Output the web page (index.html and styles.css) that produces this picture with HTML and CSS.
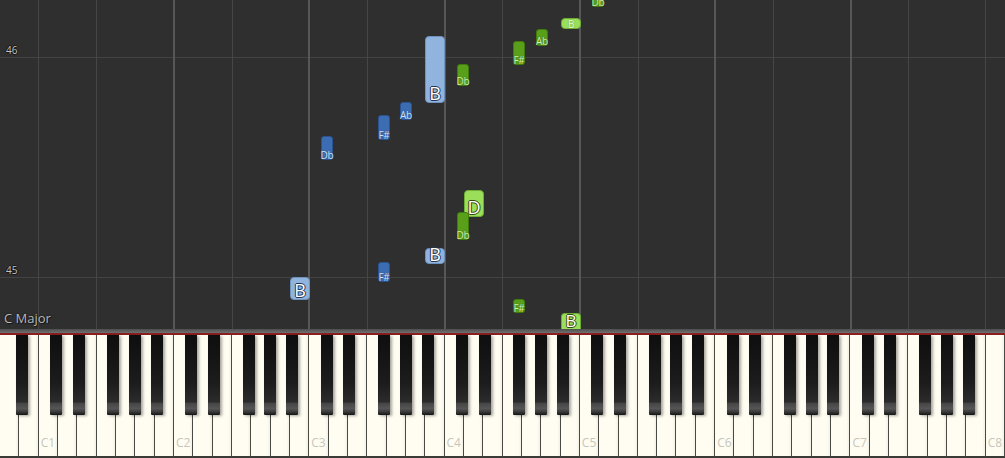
FILE: index.html
```html
<!DOCTYPE html>
<html>
<head>
<meta charset="utf-8">
<link rel="stylesheet" href="styles.css">
</head>
<body>
<div class="app">
  <div class="roll">
    <div class="hline" style="top:57px"></div>
    <div class="hline" style="top:277px"></div>
    <div class="vline" style="left:38px"></div>
    <div class="vline" style="left:96px"></div>
    <div class="vline major" style="left:173px"></div>
    <div class="vline" style="left:232px"></div>
    <div class="vline major" style="left:308px"></div>
    <div class="vline" style="left:367px"></div>
    <div class="vline major" style="left:444px"></div>
    <div class="vline" style="left:502px"></div>
    <div class="vline major" style="left:579px"></div>
    <div class="vline" style="left:638px"></div>
    <div class="vline major" style="left:714px"></div>
    <div class="vline" style="left:773px"></div>
    <div class="vline major" style="left:850px"></div>
    <div class="vline" style="left:908px"></div>
    <div class="vline" style="left:985px"></div>

    <div class="measure" style="top:44px">46</div>
    <div class="measure" style="top:264px">45</div>

    <div class="note lh-b" style="left:321px;top:136px;height:24px"><span class="lbl">Db</span></div>
    <div class="note lh-b" style="left:378px;top:115px;height:25px"><span class="lbl">F#</span></div>
    <div class="note lh-b" style="left:400px;top:102px;height:18px"><span class="lbl">Ab</span></div>
    <div class="note lh-b" style="left:378px;top:262px;height:20px"><span class="lbl">F#</span></div>
    <div class="note lh-w" style="left:425px;top:36px;height:67px"><span class="big">B</span></div>
    <div class="note lh-w" style="left:425px;top:248px;height:16px"><span class="big">B</span></div>
    <div class="note lh-w" style="left:290px;top:277px;height:23px"><span class="big">B</span></div>

    <div class="note rh-b" style="left:457px;top:64px;height:22px"><span class="lbl">Db</span></div>
    <div class="note rh-b" style="left:513px;top:41px;height:24px"><span class="lbl">F#</span></div>
    <div class="note rh-b" style="left:536px;top:29px;height:17px"><span class="lbl">Ab</span></div>
    <div class="note rh-b" style="left:592px;top:-10px;height:17px"><span class="lbl">Db</span></div>
    <div class="note rh-w" style="left:561px;top:18px;height:11px"><span class="lbl">B</span></div>
    <div class="note rh-w" style="left:464px;top:190px;height:27px"><span class="big">D</span></div>
    <div class="note rh-b" style="left:457px;top:212px;height:28px"><span class="lbl">Db</span></div>
    <div class="note rh-b" style="left:513px;top:299px;height:14px"><span class="lbl">F#</span></div>
    <div class="note rh-w open" style="left:561px;top:313px;height:16px"><span class="big">B</span></div>

    <div class="key-name">C Major</div>
  </div>

  <div class="rail"></div>

  <div class="keyboard">
    <div class="wk"><span class="bk"></span></div>
    <div class="wk"></div>
    <div class="wk"><span class="bk c"></span><span class="oct">C1</span></div>
    <div class="wk"><span class="bk d"></span></div>
    <div class="wk"></div>
    <div class="wk"><span class="bk f"></span></div>
    <div class="wk"><span class="bk g"></span></div>
    <div class="wk"><span class="bk"></span></div>
    <div class="wk"></div>
    <div class="wk"><span class="bk c"></span><span class="oct">C2</span></div>
    <div class="wk"><span class="bk d"></span></div>
    <div class="wk"></div>
    <div class="wk"><span class="bk f"></span></div>
    <div class="wk"><span class="bk g"></span></div>
    <div class="wk"><span class="bk"></span></div>
    <div class="wk"></div>
    <div class="wk"><span class="bk c"></span><span class="oct">C3</span></div>
    <div class="wk"><span class="bk d"></span></div>
    <div class="wk"></div>
    <div class="wk"><span class="bk f"></span></div>
    <div class="wk"><span class="bk g"></span></div>
    <div class="wk"><span class="bk"></span></div>
    <div class="wk"></div>
    <div class="wk"><span class="bk c"></span><span class="oct">C4</span></div>
    <div class="wk"><span class="bk d"></span></div>
    <div class="wk"></div>
    <div class="wk"><span class="bk f"></span></div>
    <div class="wk"><span class="bk g"></span></div>
    <div class="wk"><span class="bk"></span></div>
    <div class="wk"></div>
    <div class="wk"><span class="bk c"></span><span class="oct">C5</span></div>
    <div class="wk"><span class="bk d"></span></div>
    <div class="wk"></div>
    <div class="wk"><span class="bk f"></span></div>
    <div class="wk"><span class="bk g"></span></div>
    <div class="wk"><span class="bk"></span></div>
    <div class="wk"></div>
    <div class="wk"><span class="bk c"></span><span class="oct">C6</span></div>
    <div class="wk"><span class="bk d"></span></div>
    <div class="wk"></div>
    <div class="wk"><span class="bk f"></span></div>
    <div class="wk"><span class="bk g"></span></div>
    <div class="wk"><span class="bk"></span></div>
    <div class="wk"></div>
    <div class="wk"><span class="bk c"></span><span class="oct">C7</span></div>
    <div class="wk"><span class="bk d"></span></div>
    <div class="wk"></div>
    <div class="wk"><span class="bk f"></span></div>
    <div class="wk"><span class="bk g"></span></div>
    <div class="wk"><span class="bk"></span></div>
    <div class="wk"></div>
    <div class="wk"><span class="oct">C8</span></div>
  </div>
</div>
</body>
</html>
```

FILE: styles.css
```css
html, body {
  margin: 0;
  padding: 0;
  background: #2f2f2f;
  overflow: hidden;
}
.app {
  width: 1005px;
  height: 458px;
  display: flex;
  flex-direction: column;
  font-family: "Open Sans", "DejaVu Sans", sans-serif;
}
.roll {
  position: relative;
  height: 329px;
  background: #2f2f2f;
  overflow: hidden;
  flex: none;
}
.hline {
  position: absolute;
  left: 0;
  right: 0;
  height: 1px;
  background: #434343;
}
.vline {
  position: absolute;
  top: 0;
  bottom: 0;
  width: 1px;
  background: #464646;
}
.vline.major {
  width: 2px;
  background: #575757;
}
.measure {
  position: absolute;
  left: 6px;
  font-size: 10px;
  line-height: 12px;
  color: #c4c4c4;
  text-shadow: -1px 0 0 #151515, 1px 0 0 #151515, 0 -1px 0 #151515, 0 1px 0 #151515;
}
.key-name {
  position: absolute;
  left: 4px;
  top: 309px;
  font-size: 13px;
  line-height: 18px;
  color: #b8b8b8;
  text-shadow: 0 0 2px #111, 1px 1px 0 #1a1a1a;
}
.note {
  position: absolute;
  box-sizing: border-box;
  border-radius: 3px;
  width: 12px;
  display: flex;
  justify-content: center;
  align-items: flex-end;
}
.lh-b {
  background: #3c6db3;
  border: 1px solid #2b5391;
}
.lh-w {
  width: 20px;
  background: #91b4de;
  border: 1px solid #6f92bf;
  border-radius: 4px;
}
.rh-b {
  background: #5a9f1a;
  border: 1px solid #3f7c0c;
}
.rh-w {
  width: 20px;
  background: #9ade5a;
  border: 1px solid #6eae32;
  border-radius: 4px;
}
.rh-w.open {
  border-bottom: none;
  border-radius: 4px 4px 0 0;
}
.lbl {
  font-size: 10px;
  line-height: 10px;
  margin-bottom: -1px;
  white-space: nowrap;
  letter-spacing: -0.3px;
}
.lh-b .lbl { color: #d3e1f5; text-shadow: 0 0 1px #1f3f70; }
.rh-b .lbl { color: #d4efb2; text-shadow: 0 0 1px #2e5a08; }
.rh-w .lbl { color: #eaffd6; text-shadow: 0 0 1px #4f8a1c; }
.big {
  font-size: 18px;
  line-height: 16px;
  margin-bottom: 1px;
  color: #ffffff;
  text-shadow: -1px 0 0 #24364f, 1px 0 0 #24364f, 0 -1px 0 #24364f, 0 1px 0 #24364f;
}
.rh-w .big {
  text-shadow: -1px 0 0 #2e4a14, 1px 0 0 #2e4a14, 0 -1px 0 #2e4a14, 0 1px 0 #2e4a14;
}
.rh-w.open .big {
  font-size: 17px;
  line-height: 14px;
  margin-bottom: 1px;
}
.rail {
  height: 4px;
  background: linear-gradient(#4e4e4e, #707070);
  flex: none;
}
.keyboard {
  height: 125px;
  display: flex;
  border-top: 2px solid #8a1e1e;
  box-sizing: border-box;
  background: #fffdf1;
  flex: none;
}
.wk {
  position: relative;
  flex: 1;
  box-sizing: border-box;
  border-right: 1px solid #4a4a44;
  border-bottom: 2px solid #3a3a36;
  background: linear-gradient(to right, #fffdf1 85%, #f3f1e6);
}
.bk {
  position: absolute;
  top: 0;
  left: 15.7px;
  width: 12px;
  height: 80px;
  z-index: 2;
  border-radius: 0 0 1px 1px;
  background: linear-gradient(#0e0e0e 0%, #1c1c1c 60%, #2c2c2c 84%, #454545 85%, #555 92%, #3a3a3a 96%, #141414 100%);
  box-shadow: 2px 1px 3px rgba(0, 0, 0, 0.35);
}
.bk.c { left: 11.4px; }
.bk.d { left: 14.7px; }
.bk.f { left: 10.7px; }
.bk.g { left: 13.1px; }
.oct {
  position: absolute;
  left: 2px;
  bottom: 6px;
  font-size: 12px;
  line-height: 14px;
  color: #c6c6bc;
}
```
